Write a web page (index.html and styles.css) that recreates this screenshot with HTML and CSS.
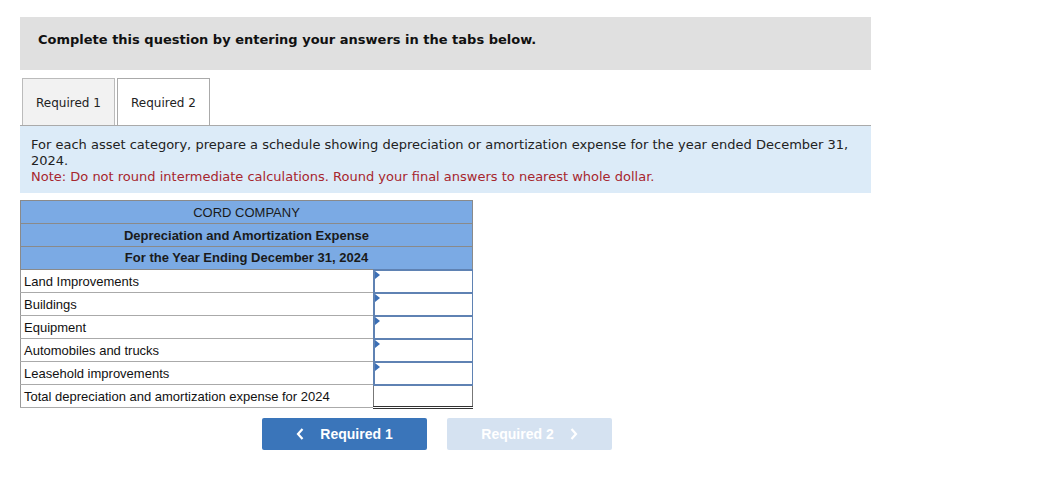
FILE: index.html
```html
<!DOCTYPE html>
<html>
<head>
<meta charset="utf-8">
<link rel="stylesheet" href="styles.css">
</head>
<body>
<div class="page">
  <div class="banner">Complete this question by entering your answers in the tabs below.</div>
  <div class="tabs">
    <div class="tab">Required 1</div>
    <div class="tab active">Required 2</div>
  </div>
  <div class="prompt">
    <div>For each asset category, prepare a schedule showing depreciation or amortization expense for the year ended December 31, 2024.</div>
    <div class="note">Note: Do not round intermediate calculations. Round your final answers to nearest whole dollar.</div>
  </div>
  <table class="sched">
    <tr class="head"><td colspan="2">CORD COMPANY</td></tr>
    <tr class="head bold"><td colspan="2">Depreciation and Amortization Expense</td></tr>
    <tr class="head bold"><td colspan="2">For the Year Ending December 31, 2024</td></tr>
    <tr><td class="label">Land Improvements</td><td class="inp"><span class="flag"></span></td></tr>
    <tr><td class="label">Buildings</td><td class="inp"><span class="flag"></span></td></tr>
    <tr><td class="label">Equipment</td><td class="inp"><span class="flag"></span></td></tr>
    <tr><td class="label">Automobiles and trucks</td><td class="inp"><span class="flag"></span></td></tr>
    <tr><td class="label">Leasehold improvements</td><td class="inp"><span class="flag"></span></td></tr>
    <tr><td class="label">Total depreciation and amortization expense for 2024</td><td class="total"></td></tr>
  </table>
  <div class="nav">
    <div class="btn prev"><svg class="chev" width="8" height="12" viewBox="0 0 8 12"><path d="M6.5 1 L2 6 L6.5 11" fill="none" stroke="#fff" stroke-width="2.2"/></svg>Required 1</div>
    <div class="btn next disabled">Required 2<svg class="chev r" width="8" height="12" viewBox="0 0 8 12"><path d="M1.5 1 L6 6 L1.5 11" fill="none" stroke="#fff" stroke-width="2.2"/></svg></div>
  </div>
</div>
</body>
</html>
```
FILE: styles.css
```css
html, body { margin: 0; padding: 0; background: #fff; }
.page {
  margin-left: 20px;
  width: 851px;
  padding-top: 17px;
  font-family: "DejaVu Sans", Verdana, sans-serif;
}
.banner {
  background: #e0e0e0;
  height: 53px;
  box-sizing: border-box;
  padding: 15px 0 0 18px;
  line-height: 16px;
  font-weight: bold;
  font-size: 13px;
  color: #111;
}
.tabs {
  display: flex;
  gap: 2px;
  margin-top: 8px;
  margin-left: 2px;
}
.tab {
  width: 93px;
  height: 47px;
  box-sizing: border-box;
  border: 1px solid #bbb;
  border-bottom: none;
  background: #f2f2f2;
  display: flex;
  align-items: center;
  justify-content: center;
  padding-top: 2px;
  font-size: 12px;
  color: #222;
}
.tab.active { background: #fff; border-color: #aaa; }
.prompt {
  background: #dcebf8;
  border-top: 1px solid #aaa;
  padding: 11px 11px 8px 11px;
  font-size: 13px;
  line-height: 16px;
  color: #222;
}
.note { color: #a7262e; }
.sched {
  margin-top: 7px;
  border-collapse: collapse;
  width: 453px;
  font-family: "Liberation Sans", Arial, sans-serif;
  font-size: 13px;
  color: #111;
}
.sched td { height: 23px; box-sizing: border-box; padding: 0; }
.head td {
  background: #7baae4;
  text-align: center;
  border: 1px solid #8a8a8a;
  color: #1a1a1a;
}
.head.bold td { font-weight: bold; }
.label {
  border-left: 1px solid #999;
  border-bottom: 1px solid #aaa;
  padding-left: 3px !important;
  width: 353px;
}
.inp {
  position: relative;
  border: 2px solid #5f82b3;
  border-right-width: 1px;
  background: #fff;
}
.flag {
  position: absolute;
  left: 0;
  top: 0;
  width: 0; height: 0;
  border-top: 4px solid transparent;
  border-bottom: 4px solid transparent;
  border-left: 5px solid #3b6fb6;
}
.total {
  border: 1px solid #777;
  border-bottom: 3px double #333;
}
.nav {
  display: flex;
  gap: 20px;
  margin-top: 9px;
  margin-left: 242px;
}
.btn {
  width: 165px;
  height: 32px;
  border-radius: 2px;
  display: flex;
  align-items: center;
  justify-content: center;
  font-family: "Liberation Sans", Arial, sans-serif;
  font-weight: bold;
  font-size: 14px;
  color: #fff;
  background: #3a75ba;
}
.btn.disabled { background: #d5e2f1; }
.chev { margin-right: 16px; }
.chev.r { margin-right: 0; margin-left: 16px; }
```
